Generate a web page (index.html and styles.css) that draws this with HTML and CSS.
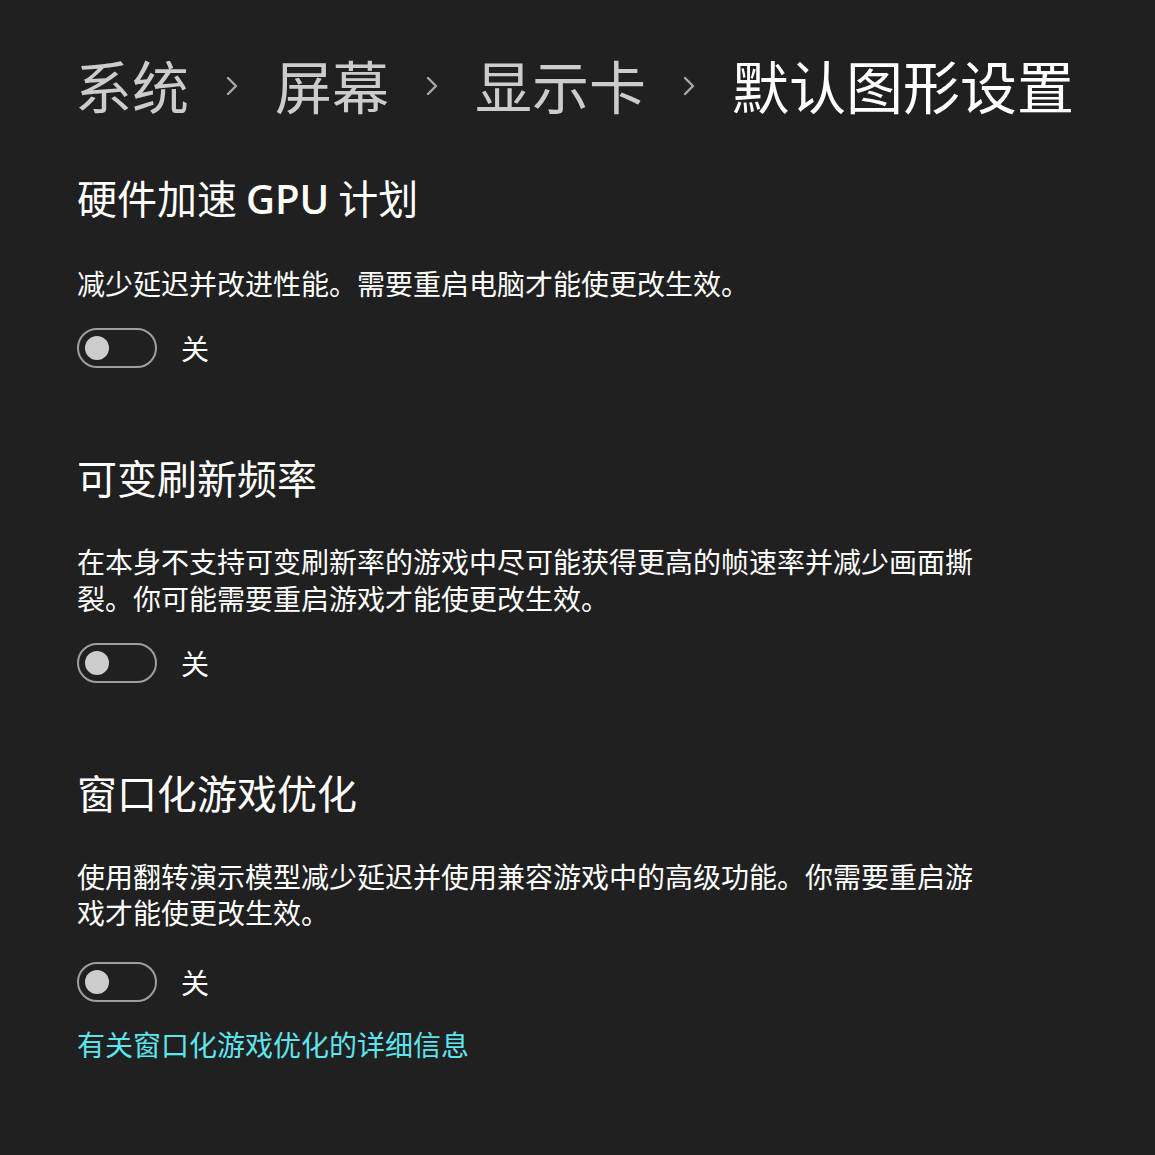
FILE: index.html
```html
<!DOCTYPE html>
<html lang="zh-CN">
<head>
<meta charset="utf-8">
<title>默认图形设置</title>
<link rel="stylesheet" href="styles.css">
</head>
<body>
<div class="page">
  <nav class="crumbs">
    <span class="crumb">系统</span>
    <svg class="chev" viewBox="0 0 14 22" width="14" height="22"><path d="M3 3 L11 11 L3 19" fill="none" stroke="#a8a8a8" stroke-width="2.4" stroke-linecap="round" stroke-linejoin="round"/></svg>
    <span class="crumb">屏幕</span>
    <svg class="chev" viewBox="0 0 14 22" width="14" height="22"><path d="M3 3 L11 11 L3 19" fill="none" stroke="#a8a8a8" stroke-width="2.4" stroke-linecap="round" stroke-linejoin="round"/></svg>
    <span class="crumb">显示卡</span>
    <svg class="chev" viewBox="0 0 14 22" width="14" height="22"><path d="M3 3 L11 11 L3 19" fill="none" stroke="#a8a8a8" stroke-width="2.4" stroke-linecap="round" stroke-linejoin="round"/></svg>
    <span class="crumb current">默认图形设置</span>
  </nav>

  <section class="setting s1">
    <h2 class="title">硬件加速 <span class="latin">GPU</span> 计划</h2>
    <p class="desc">减少延迟并改进性能。需要重启电脑才能使更改生效。</p>
    <div class="toggle-row"><span class="toggle"><span class="knob"></span></span><span class="state">关</span></div>
  </section>

  <section class="setting s2">
    <h2 class="title">可变刷新频率</h2>
    <p class="desc">在本身不支持可变刷新率的游戏中尽可能获得更高的帧速率并减少画面撕裂。你可能需要重启游戏才能使更改生效。</p>
    <div class="toggle-row"><span class="toggle"><span class="knob"></span></span><span class="state">关</span></div>
  </section>

  <section class="setting s3">
    <h2 class="title">窗口化游戏优化</h2>
    <p class="desc">使用翻转演示模型减少延迟并使用兼容游戏中的高级功能。你需要重启游戏才能使更改生效。</p>
    <div class="toggle-row"><span class="toggle"><span class="knob"></span></span><span class="state">关</span></div>
    <a class="link" href="#">有关窗口化游戏优化的详细信息</a>
  </section>
</div>
</body>
</html>
```
FILE: styles.css
```css
html, body {
  margin: 0;
  padding: 0;
  background: #202020;
}
body {
  font-family: "Noto Sans CJK SC", "Noto Sans", sans-serif;
  color: #ffffff;
}
.page {
  padding: 50px 0 0 77px;
}
.crumbs {
  display: flex;
  align-items: center;
  gap: 36px;
  height: 68px;
  margin-left: -2px;
}
.crumb {
  font-size: 57px;
  line-height: 68px;
  color: #cccccc;
  font-weight: 400;
}
.crumb.current {
  color: #ffffff;
}
.chev {
  flex: none;
  margin-top: 4px;
}
.setting {
  display: flex;
  flex-direction: column;
  align-items: flex-start;
}
.title {
  margin: 0;
  font-size: 40px;
  line-height: 56px;
  font-weight: 400;
}
.latin {
  font-family: "Open Sans", "Noto Sans", sans-serif;
  font-weight: 600;
}
.desc {
  margin: 38px 0 0 0;
  font-size: 28px;
  line-height: 37px;
  max-width: 905px;
}
.s1 { margin-top: 51px; }
.s2 { margin-top: 81px; }
.s3 { margin-top: 81px; }
.s3 .desc { line-height: 36px; }
.toggle-row {
  display: flex;
  align-items: center;
  margin-top: 26px;
  height: 40px;
}
.s3 .toggle-row { margin-top: 32px; }
.toggle {
  box-sizing: border-box;
  width: 80px;
  height: 40px;
  border: 2px solid #9e9e9e;
  border-radius: 20px;
  display: flex;
  align-items: center;
  padding-left: 6px;
}
.knob {
  width: 24px;
  height: 24px;
  border-radius: 50%;
  background: #cccccc;
}
.state {
  margin-left: 24px;
  font-size: 28px;
  line-height: 37px;
}
.link {
  margin-top: 24px;
  font-size: 28px;
  line-height: 37px;
  color: #5ee4ee;
  text-decoration: none;
}
```
